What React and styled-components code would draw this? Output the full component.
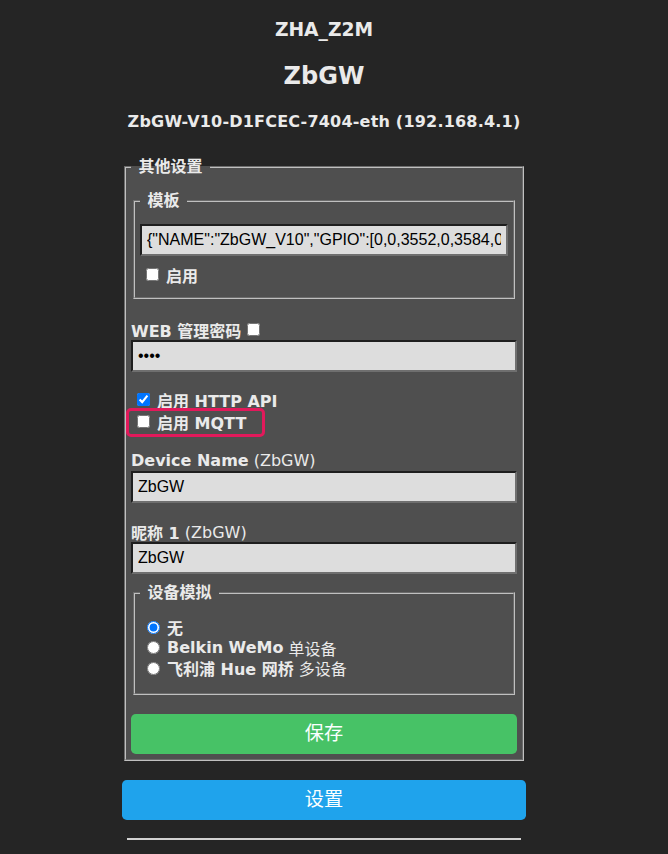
import styled, { createGlobalStyle } from "styled-components";

const GlobalStyle = createGlobalStyle`
  body {
    margin: 0;
    background: #252525;
    color: #eaeaea;
    font-family: "DejaVu Sans", "Noto Sans CJK SC", sans-serif;
    font-size: 16px;
  }
`;

const Page = styled.div`
  padding: 0 0 20px 117px;
`;

const Container = styled.div`
  width: 404px;
  padding: 0 5px;
`;

const Header = styled.header`
  text-align: center;
`;

const ModuleName = styled.h3`
  margin: 19px 0 0;
  font-size: 18.72px;
  line-height: 22px;
`;

const DeviceTitle = styled.h2`
  margin: 21px 0 0;
  font-size: 24px;
  line-height: 28px;
`;

const HostName = styled.h4`
  margin: 21.6px 0 0;
  font-size: 16px;
  line-height: 19px;
  letter-spacing: 0.2px;
`;

const Panel = styled.fieldset`
  margin: ${({ $top }) => $top || 0}px 2px 0;
  padding: 5px;
  border: 2px groove rgb(192, 192, 192);
  background: #4f4f4f;
  min-width: 0;
`;

const Legend = styled.legend`
  padding: 0 2px;
  font-weight: bold;
  line-height: 20px;
`;

const TextInput = styled.input`
  display: block;
  width: 100%;
  height: 32px;
  box-sizing: border-box;
  margin-top: ${({ $top }) => $top || 0}px;
  padding: 5px;
  font-family: "Liberation Sans", Arial, sans-serif;
  font-size: 16px;
  background: #dddddd;
  color: #000;
  border-width: 2px;
  border-style: solid;
  border-color: #1e1e1e #6f6f6f #6f6f6f #1e1e1e;
  outline: none;
`;

const CheckRow = styled.label`
  display: flex;
  align-items: center;
  width: fit-content;
  height: 22px;
  margin-top: ${({ $top }) => $top || 0}px;
  margin-bottom: ${({ $bottom }) => $bottom || 0}px;
  font-weight: bold;
  position: relative;

  ${({ $marked }) =>
    $marked &&
    `
    &::after {
      content: "";
      position: absolute;
      top: -3px;
      bottom: -4px;
      left: -5px;
      right: -19px;
      border: 3px solid #e2195b;
      border-radius: 5px;
    }
  `}
`;

const Checkbox = styled.input.attrs({ type: "checkbox" })`
  width: 13px;
  height: 13px;
  margin: 0 7px 0 6px;
`;

const FieldLabel = styled.div`
  display: flex;
  align-items: center;
  height: 20px;
  margin-top: ${({ $top }) => $top || 0}px;
  white-space: pre;

  b {
    font-weight: bold;
  }
`;

const RadioList = styled.div`
  margin: 9px 0 9px;
`;

const RadioRow = styled.label`
  display: flex;
  align-items: center;
  height: 20.5px;
  white-space: pre;
`;

const Radio = styled.input.attrs({ type: "radio", name: "emu" })`
  width: 13px;
  height: 13px;
  margin: 0 7px 0 7px;
`;

const Button = styled.button`
  display: block;
  width: 100%;
  margin-top: ${({ $top }) => $top || 0}px;
  padding: 1px 6px;
  border: 0;
  border-radius: 0.3rem;
  background: ${({ $green }) => ($green ? "#47c266" : "#1fa3ec")};
  color: #faffff;
  font-family: "Liberation Sans", "Noto Sans CJK SC", sans-serif;
  font-size: 1.2rem;
  line-height: 2.4rem;
  cursor: pointer;
`;

const Rule = styled.hr`
  margin: 18px 5px 0;
  height: 0;
  border: 0;
  border-top: 2px solid #d2d2d2;
`;

const template =
  '{"NAME":"ZbGW_V10","GPIO":[0,0,3552,0,3584,0,0,0,5793,5792,320,544,5536,0,0,0,0,0,0,0,0,0,0,0,0,0,0,0,0,0,0,0,0,0,0,0],"FLAG":0,"BASE":1}';

export default function App() {
  return (
    <>
      <GlobalStyle />
      <Page>
        <Container>
          <Header>
            <ModuleName>ZHA_Z2M</ModuleName>
            <DeviceTitle>ZbGW</DeviceTitle>
            <HostName>ZbGW-V10-D1FCEC-7404-eth (192.168.4.1)</HostName>
          </Header>

          <Panel $top={26}>
            <Legend>&nbsp;其他设置&nbsp;</Legend>

            <Panel $top={9}>
              <Legend>&nbsp;模板&nbsp;</Legend>
              <TextInput $top={8} defaultValue={template} />
              <CheckRow $top={8} $bottom={6}>
                <Checkbox />
                启用
              </CheckRow>
            </Panel>

            <FieldLabel $top={21}>
              <b>WEB 管理密码</b>
              <Checkbox />
            </FieldLabel>
            <TextInput type="password" defaultValue="****" />

            <CheckRow $top={17}>
              <Checkbox defaultChecked />
              启用 HTTP API
            </CheckRow>
            <CheckRow $marked>
              <Checkbox />
              启用 MQTT
            </CheckRow>

            <FieldLabel $top={18}>
              <b>Device Name</b> (ZbGW)
            </FieldLabel>
            <TextInput defaultValue="ZbGW" />

            <FieldLabel $top={19.5}>
              <b>昵称 1</b> (ZbGW)
            </FieldLabel>
            <TextInput defaultValue="ZbGW" />

            <Panel $top={9}>
              <Legend>&nbsp;设备模拟&nbsp;</Legend>
              <RadioList>
                <RadioRow>
                  <Radio defaultChecked />
                  <b>无</b>
                </RadioRow>
                <RadioRow>
                  <Radio />
                  <b>Belkin WeMo</b> 单设备
                </RadioRow>
                <RadioRow>
                  <Radio />
                  <b>飞利浦 Hue 网桥</b> 多设备
                </RadioRow>
              </RadioList>
            </Panel>

            <Button $green $top={19}>
              保存
            </Button>
          </Panel>

          <Button $top={19}>设置</Button>
          <Rule />
        </Container>
      </Page>
    </>
  );
}
